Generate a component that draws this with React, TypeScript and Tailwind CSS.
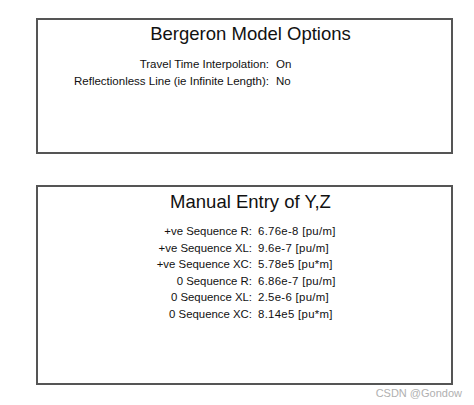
import React from "react";

const font = { fontFamily: '"Liberation Sans", Arial, sans-serif' };

export default function App() {
  const rows1: [string, string][] = [
    ["Travel Time Interpolation:", "On"],
    ["Reflectionless Line (ie Infinite Length):", "No"],
  ];
  const rows2: [string, string][] = [
    ["+ve Sequence R:", "6.76e-8 [pu/m]"],
    ["+ve Sequence XL:", "9.6e-7 [pu/m]"],
    ["+ve Sequence XC:", "5.78e5 [pu*m]"],
    ["0 Sequence R:", "6.86e-7 [pu/m]"],
    ["0 Sequence XL:", "2.5e-6 [pu/m]"],
    ["0 Sequence XC:", "8.14e5 [pu*m]"],
  ];
  return (
    <div className="w-[474px] h-[405px] bg-white pt-[18px] pl-[36px] text-[#111111]" style={font}>
      <div className="w-[417px] h-[136px] border-2 border-[#555555] flex flex-col">
        <div className="text-[18.5px] leading-[24px] mt-[2px] pl-[12px] text-center">Bergeron Model Options</div>
        <div className="grid grid-cols-[231px_auto] gap-x-[7px] mt-[10px] text-[11.5px] leading-[17px]">
          {rows1.map(([a, b]) => (
            <React.Fragment key={a}>
              <div className="text-right">{a}</div>
              <div>{b}</div>
            </React.Fragment>
          ))}
        </div>
      </div>
      <div className="w-[417px] h-[200px] mt-[31px] border-2 border-[#555555] flex flex-col">
        <div className="text-[18.5px] leading-[24px] mt-[3px] pl-[12px] text-center">Manual Entry of Y,Z</div>
        <div className="grid grid-cols-[214px_auto] gap-x-[6px] mt-[9px] text-[11.4px] leading-[16.5px]">
          {rows2.map(([a, b]) => (
            <React.Fragment key={a}>
              <div className="text-right">{a}</div>
              <div className="tracking-[0.3px]">{b}</div>
            </React.Fragment>
          ))}
        </div>
      </div>
      <div className="w-[426px] text-right text-[11px] leading-[14px] mt-[1px] text-[#b0b0b0]">
        CSDN @Gondow
      </div>
    </div>
  );
}
